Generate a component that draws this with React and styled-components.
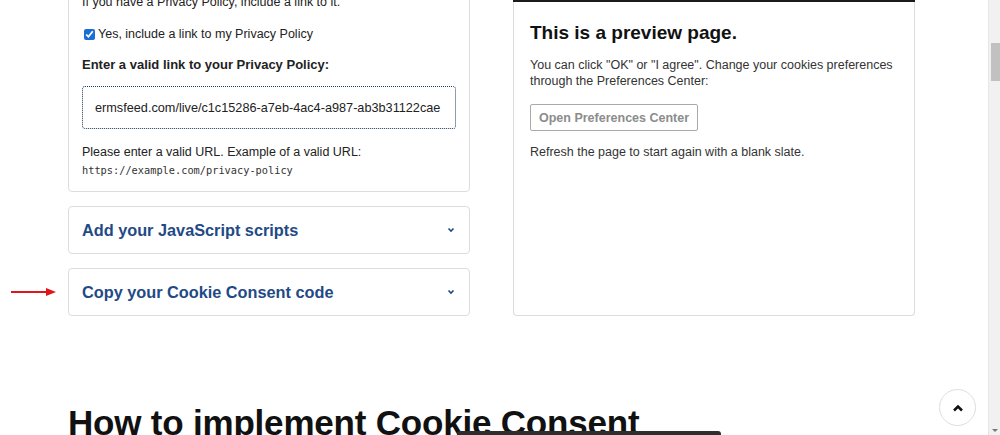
import React from "react";
import styled, { createGlobalStyle } from "styled-components";

const Global = createGlobalStyle`
  html, body { margin: 0; padding: 0; background: #fff; overflow: hidden; height: 100%; }
  body { font-family: "Liberation Sans", Arial, sans-serif; color: #222; }
  * { box-sizing: border-box; }
`;

const Page = styled.div`
  width: 988px;
  height: 435px;
  overflow: hidden;
  position: relative;
`;

const Columns = styled.div`
  display: grid;
  grid-template-columns: 402px 402px;
  column-gap: 43px;
  padding-left: 68px;
  margin-top: -24px;
  align-items: start;
`;

const LeftCol = styled.div`
  display: flex;
  flex-direction: column;
  gap: 14px;
`;

const Card = styled.div`
  border: 1px solid #dcdcdc;
  border-radius: 4px;
  background: #fff;
  padding: ${(p) => p.$pad || "16px 13px 12px"};
`;

const Text = styled.p`
  margin: ${(p) => p.$mt || 0}px 0 0;
  font-size: ${(p) => (p.$bold ? 13 : 12.5)}px;
  line-height: 18px;
  color: #222;
  font-weight: ${(p) => (p.$bold ? 700 : 400)};
`;

const CheckRow = styled.label`
  display: flex;
  align-items: center;
  gap: 2px;
  margin-top: 14px;
  padding-left: 2px;
  font-size: 12.5px;
  line-height: 18px;
  color: #222;
`;

const Check = styled.input`
  width: 11px;
  height: 11px;
  margin: 0 1px 0 0;
  accent-color: #1a6fd6;
`;

const UrlInput = styled.input`
  display: block;
  width: 100%;
  height: 43px;
  margin-top: 12px;
  border: 1px dotted #1f3a5c;
  border-radius: 3px;
  padding: 0 12px;
  font-family: "Liberation Sans", Arial, sans-serif;
  font-size: 12.7px;
  color: #222;
  background: #fff;
  outline: none;
`;

const Mono = styled.div`
  font-family: "DejaVu Sans Mono", "Liberation Mono", monospace;
  font-size: 10.3px;
  line-height: 18px;
  color: #333;
`;

const AccordionHead = styled.div`
  display: flex;
  align-items: center;
  justify-content: space-between;
  height: 46px;
  padding: 0 14px 0 13px;
`;

const AccordionTitle = styled.h3`
  margin: 0;
  font-size: 16.3px;
  font-weight: 700;
  color: #1f4a85;
`;

const ArrowWrap = styled.div`
  position: relative;
`;

const RedArrow = styled.svg`
  position: absolute;
  left: -57px;
  top: 50%;
  margin-top: -5px;
`;

const Preview = styled.div`
  border: 1px solid #dcdcdc;
  border-top: none;
  border-radius: 0 0 4px 4px;
  height: 340px;
  background: #fff;
`;

const PreviewBar = styled.div`
  height: 26px;
  background: #1b1b1b;
  margin: 0 -1px;
`;

const PreviewBody = styled.div`
  padding: 20px 16px;
`;

const PreviewTitle = styled.h2`
  margin: 0;
  font-size: 19px;
  line-height: 22px;
  font-weight: 700;
  color: #111;
`;

const PText = styled.p`
  margin: ${(p) => p.$mt || 0}px 0 0;
  font-size: 12.5px;
  line-height: 16px;
  color: #333;
`;

const GhostButton = styled.button`
  display: block;
  margin-top: 15px;
  height: 27px;
  padding: 0 8px;
  border: 1px solid #a9a9a9;
  border-radius: 2px;
  background: #fff;
  font-family: "Liberation Sans", Arial, sans-serif;
  font-size: 12.5px;
  font-weight: 700;
  color: #8c8c8c;
`;

const Heading = styled.h1`
  margin: 0;
  padding: 87px 0 0 68px;
  font-size: 35px;
  line-height: 40px;
  font-weight: 700;
  color: #111;
  letter-spacing: -0.2px;
`;

const ScrollTop = styled.button`
  position: absolute;
  left: 939px;
  top: 389px;
  width: 37px;
  height: 37px;
  border-radius: 50%;
  border: 1px solid #dedede;
  background: #fff;
  display: flex;
  align-items: center;
  justify-content: center;
  padding: 0;
`;

const Toast = styled.div`
  position: absolute;
  left: 457px;
  bottom: 0;
  width: 264px;
  height: 4px;
  background: #2e2e2e;
  border-radius: 3px 3px 0 0;
`;

const Scrollbar = styled.div`
  position: fixed;
  top: 0;
  right: 0;
  width: 12px;
  height: 435px;
  background: #f1f1f1;
  border-left: 1px solid #e6e6e6;
`;

const Thumb = styled.div`
  position: absolute;
  left: 2px;
  top: 43px;
  width: 10px;
  height: 38px;
  background: #c1c1c1;
`;

const ScrollArrow = styled.div`
  position: absolute;
  left: 3px;
  bottom: 3px;
  width: 0;
  height: 0;
  border-left: 3px solid transparent;
  border-right: 3px solid transparent;
  border-top: 3px solid #777;
`;

const Chevron = () => (
  <svg width="8" height="6" viewBox="0 0 8 6">
    <path d="M1.5 1.5 L4 4 L6.5 1.5" fill="none" stroke="#1f4a85" strokeWidth="1.6" />
  </svg>
);

export default function App() {
  return (
    <Page>
      <Global />
      <Columns>
        <LeftCol>
          <Card>
            <Text>If you have a Privacy Policy, include a link to it.</Text>
            <CheckRow>
              <Check type="checkbox" defaultChecked />
              Yes, include a link to my Privacy Policy
            </CheckRow>
            <Text $bold $mt={13}>Enter a valid link to your Privacy Policy:</Text>
            <UrlInput
              type="text"
              defaultValue="ermsfeed.com/live/c1c15286-a7eb-4ac4-a987-ab3b31122cae"
            />
            <Text $mt={14}>Please enter a valid URL. Example of a valid URL:</Text>
            <Mono>https://example.com/privacy-policy</Mono>
          </Card>
          <Card $pad="0">
            <AccordionHead>
              <AccordionTitle>Add your JavaScript scripts</AccordionTitle>
              <Chevron />
            </AccordionHead>
          </Card>
          <ArrowWrap>
            <RedArrow width="46" height="10" viewBox="0 0 46 10">
              <line x1="0" y1="5" x2="37" y2="5" stroke="#e0141c" strokeWidth="2.2" />
              <path d="M35 1 L45 5 L35 9 Z" fill="#e0141c" />
            </RedArrow>
            <Card $pad="0">
              <AccordionHead>
                <AccordionTitle>Copy your Cookie Consent code</AccordionTitle>
                <Chevron />
              </AccordionHead>
            </Card>
          </ArrowWrap>
        </LeftCol>
        <Preview>
          <PreviewBar />
          <PreviewBody>
            <PreviewTitle>This is a preview page.</PreviewTitle>
            <PText $mt={13}>
              You can click "OK" or "I agree". Change your cookies preferences
              through the Preferences Center:
            </PText>
            <GhostButton>Open Preferences Center</GhostButton>
            <PText $mt={13}>Refresh the page to start again with a blank slate.</PText>
          </PreviewBody>
        </Preview>
      </Columns>
      <Heading>How to implement Cookie Consent</Heading>
      <ScrollTop aria-label="Scroll to top">
        <svg width="12" height="8" viewBox="0 0 12 8">
          <path d="M2 6.5 L6 2.5 L10 6.5" fill="none" stroke="#111" strokeWidth="2.6" />
        </svg>
      </ScrollTop>
      <Toast />
      <Scrollbar>
        <Thumb />
        <ScrollArrow />
      </Scrollbar>
    </Page>
  );
}
